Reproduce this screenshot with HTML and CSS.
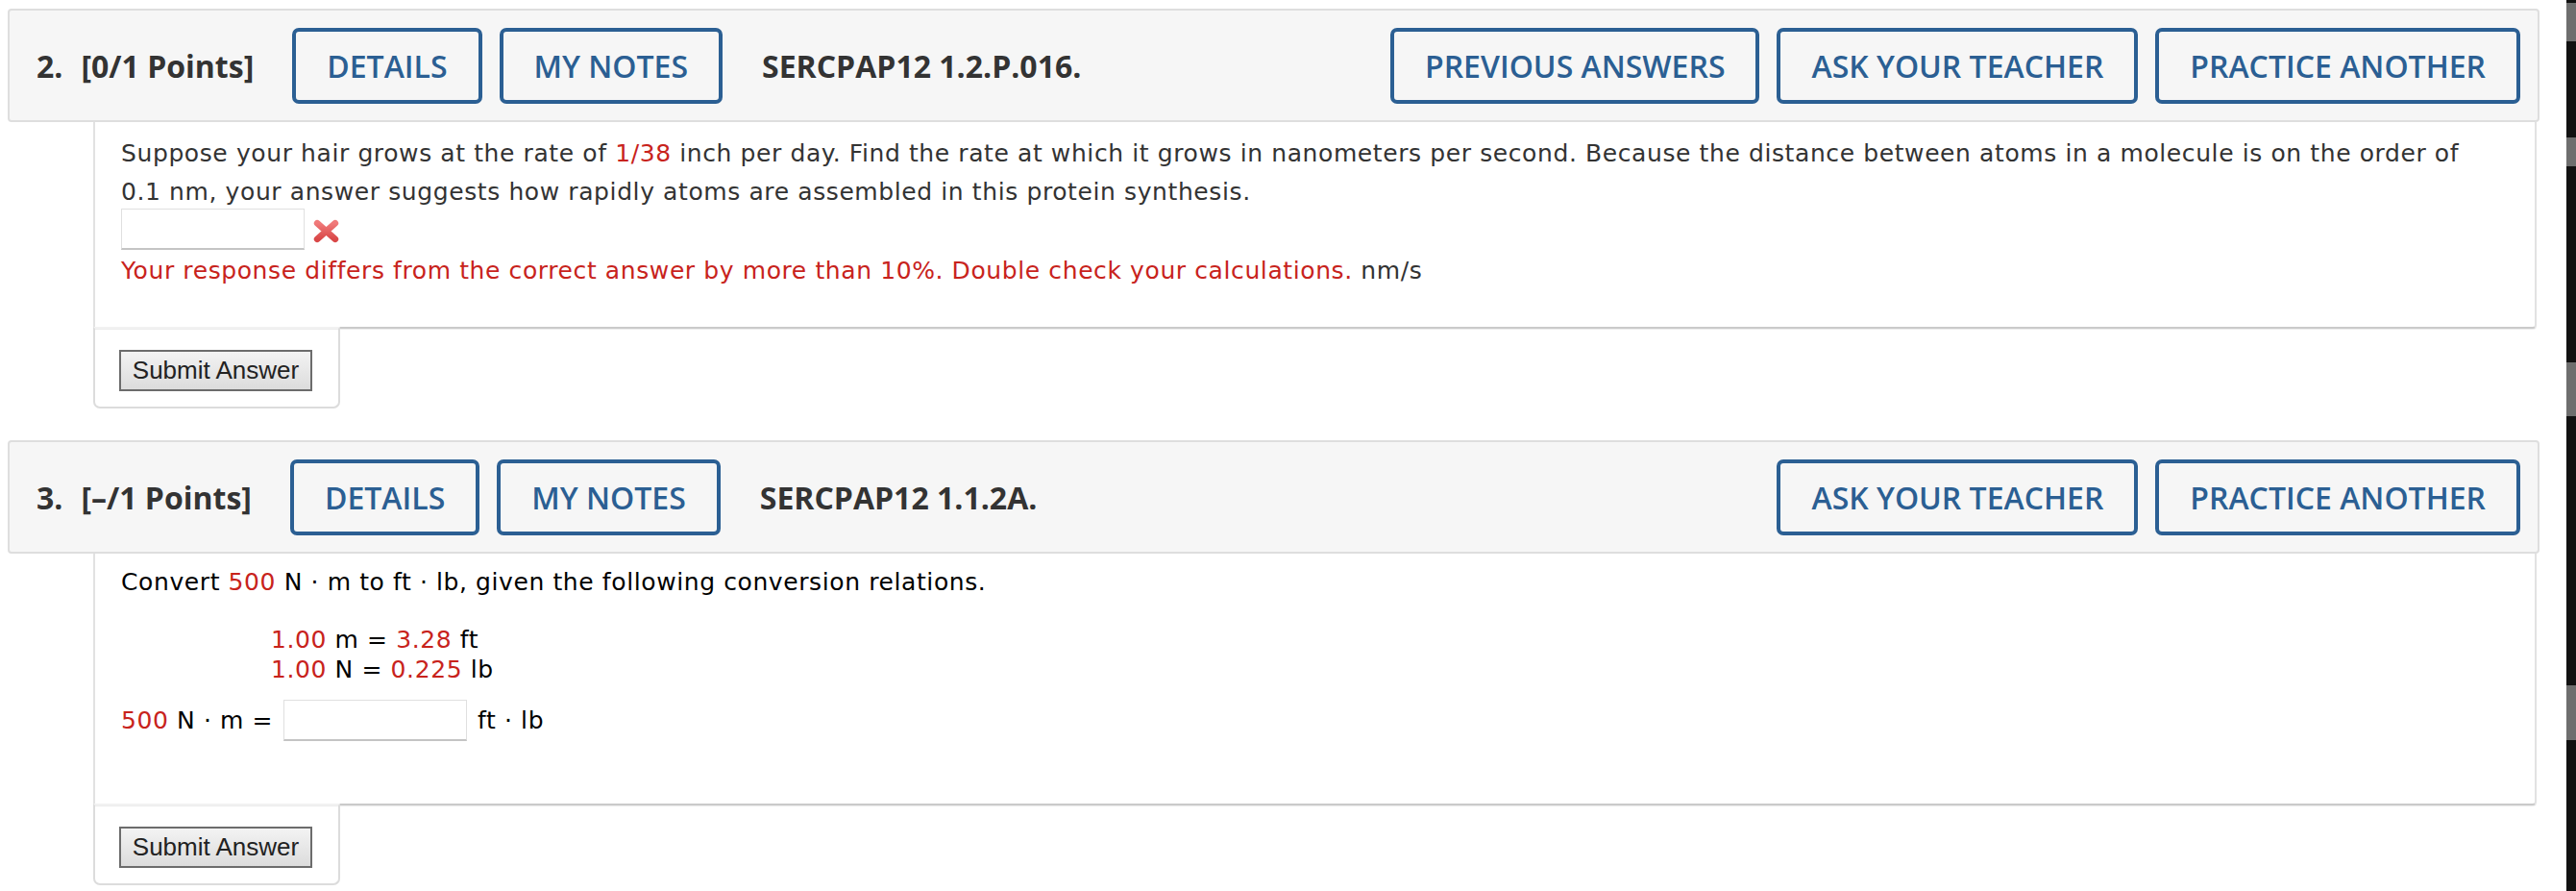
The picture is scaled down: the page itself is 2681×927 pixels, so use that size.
FILE: index.html
```html
<!DOCTYPE html>
<html lang="en">
<head>
<meta charset="utf-8">
<title>WebAssign questions</title>
<link rel="stylesheet" href="styles.css">
</head>
<body>
<div class="screen">
  <main class="page">
    <section class="question">
      <header class="q-header">
        <span class="q-num">2.</span>
        <span class="q-points">[0/1 Points]</span>
        <button class="btn">DETAILS</button>
        <button class="btn">MY NOTES</button>
        <span class="q-code">SERCPAP12 1.2.P.016.</span>
        <span class="spacer"></span>
        <button class="btn">PREVIOUS ANSWERS</button>
        <button class="btn">ASK YOUR TEACHER</button>
        <button class="btn">PRACTICE ANOTHER</button>
      </header>
      <div class="q-body q2">
        <p class="prompt">Suppose your hair grows at the rate of <span class="red">1/38</span> inch per day. Find the rate at which it grows in nanometers per second. Because the distance between atoms in a molecule is on the order of<br>0.1 nm, your answer suggests how rapidly atoms are assembled in this protein synthesis.</p>
        <div class="answer-row">
          <span class="field"></span>
          <svg class="wrong" viewBox="0 0 28 24" width="29" height="25" aria-hidden="true">
            <defs>
              <linearGradient id="xg" x1="0" y1="0" x2="0" y2="1">
                <stop offset="0" stop-color="#f07a7a"/>
                <stop offset="1" stop-color="#d94848"/>
              </linearGradient>
            </defs>
            <path d="M5 4 L23 20 M23 4 L5 20" stroke="url(#xg)" stroke-width="6.5" stroke-linecap="round" fill="none"/>
          </svg>
        </div>
        <p class="feedback"><span class="red">Your response differs from the correct answer by more than 10%. Double check your calculations.</span> nm/s</p>
      </div>
      <div class="q-submit"><button class="submit">Submit Answer</button></div>
    </section>

    <section class="question next">
      <header class="q-header">
        <span class="q-num">3.</span>
        <span class="q-points">[&ndash;/1 Points]</span>
        <button class="btn">DETAILS</button>
        <button class="btn">MY NOTES</button>
        <span class="q-code">SERCPAP12 1.1.2A.</span>
        <span class="spacer"></span>
        <button class="btn">ASK YOUR TEACHER</button>
        <button class="btn">PRACTICE ANOTHER</button>
      </header>
      <div class="q-body q3">
        <p class="prompt3">Convert <span class="red">500</span> N · m to ft · lb, given the following conversion relations.</p>
        <div class="relations">
          <div class="rel"><span class="red">1.00</span> m = <span class="red">3.28</span> ft</div>
          <div class="rel"><span class="red">1.00</span> N = <span class="red">0.225</span> lb</div>
        </div>
        <div class="calc-row">
          <span><span class="red">500</span> N · m =</span>
          <span class="field"></span>
          <span>ft · lb</span>
        </div>
      </div>
      <div class="q-submit"><button class="submit">Submit Answer</button></div>
    </section>
  </main>
  <div class="edge">
    <span class="seg s1"></span>
    <span class="seg s2"></span>
    <span class="seg s3"></span>
    <span class="seg s4"></span>
  </div>
</div>
</body>
</html>
```
FILE: styles.css
```css
html, body {
  margin: 0;
  padding: 0;
  background: #ffffff;
}

.screen {
  display: flex;
  height: 927px;
  overflow: hidden;
}

.page {
  flex: 1;
  padding: 9px 28px 0 8px;
}

.question.next {
  margin-top: 33px;
}

.q-header {
  display: flex;
  align-items: center;
  height: 118px;
  box-sizing: border-box;
  border: 2px solid #dedede;
  border-radius: 4px;
  background: #f6f6f6;
  padding: 0 18px 0 28px;
  font-family: "Open Sans", "DejaVu Sans", sans-serif;
  font-size: 32px;
  font-weight: 700;
  color: #333333;
}

.q-num {
  margin-right: 19px;
}

.q-points {
  margin-right: 40px;
}

.q-code {
  margin-left: 41px;
}

.spacer {
  flex: 1;
}

.btn {
  height: 79px;
  box-sizing: border-box;
  border: 4px solid #2b5f93;
  border-radius: 7px;
  background: transparent;
  padding: 0 32px;
  font-family: "Open Sans", sans-serif;
  font-size: 32px;
  font-weight: 600;
  color: #2b5f93;
  white-space: nowrap;
}

.btn + .btn {
  margin-left: 18px;
}

.q-body {
  margin: 0 3px 0 89px;
  border: 2px solid #e2e2e2;
  border-top: none;
  border-bottom-color: #cacaca;
  border-radius: 0 0 4px 0;
  box-shadow: 0 1px 1px rgba(0, 0, 0, 0.08);
  font-family: "DejaVu Sans", Verdana, sans-serif;
  font-size: 25px;
  letter-spacing: 0.6px;
  color: #333333;
}

.q2 {
  padding: 13px 27px 38px 27px;
}

.red {
  color: #c8231c;
}

.prompt {
  margin: 0;
  line-height: 40px;
  white-space: nowrap;
}

.answer-row {
  display: flex;
  align-items: center;
  height: 43px;
  margin-top: -3px;
}

.field {
  display: inline-block;
  width: 191px;
  height: 43px;
  box-sizing: border-box;
  border: 1px solid #e0e0e0;
  border-bottom: 2px solid #c4c4c4;
  background: #ffffff;
}

.wrong {
  margin-left: 8px;
  margin-top: 4px;
}

.feedback {
  margin: 2px 0 0 0;
  line-height: 40px;
  white-space: nowrap;
}

.q-submit {
  margin-left: 89px;
  width: 257px;
  box-sizing: border-box;
  border: 2px solid #dcdcdc;
  border-top: 2px solid #f2f2f2;
  margin-top: -2px;
  border-radius: 0 0 7px 7px;
  padding: 22px 0 16px 25px;
}

.submit {
  display: block;
  width: 201px;
  height: 43px;
  box-sizing: border-box;
  border: 2px solid #6c6c6c;
  background: linear-gradient(#f3f3f3, #dcdcdc);
  padding: 0;
  font-family: "Liberation Sans", Arial, sans-serif;
  font-size: 26px;
  color: #222222;
}

.q3 {
  padding: 10px 27px 66px 27px;
  color: #000000;
}

.prompt3 {
  margin: 0;
  line-height: 40px;
  white-space: nowrap;
}

.relations {
  margin: 24px 0 0 156px;
  line-height: 31px;
}

.calc-row {
  display: flex;
  align-items: center;
  gap: 11px;
  height: 42px;
  margin-top: 16px;
}

.edge {
  width: 10px;
  background: #111111;
  display: flex;
  flex-direction: column;
}

.seg {
  display: block;
  background: #6e6e6e;
}

.s1 { height: 40px; margin-top: 3px; }
.s2 { height: 30px; margin-top: 100px; }
.s3 { height: 56px; margin-top: 204px; }
.s4 { height: 57px; margin-top: 280px; }
```
